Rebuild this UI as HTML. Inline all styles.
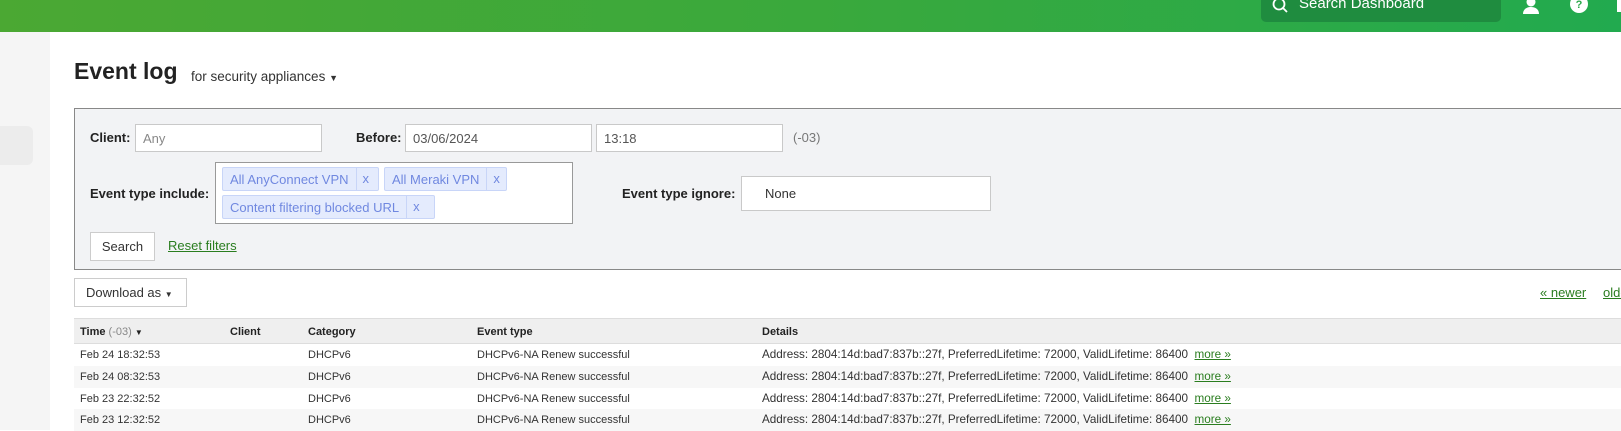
<!DOCTYPE html>
<html><head><meta charset="utf-8"><style>
*{margin:0;padding:0;box-sizing:border-box}
body{width:1621px;height:430px;overflow:hidden;background:#fff;font-family:"Liberation Sans",Arial,sans-serif;color:#222;position:relative}
.a{position:absolute}
.hdr{left:0;top:0;width:1621px;height:32px;background:linear-gradient(90deg,#4ba833 0%,#3aa93c 50%,#22aa4f 100%)}
.sb{left:0;top:32px;width:50px;height:398px;background:#f5f5f5}
.inp{background:#fff;border:1px solid #c9c9c9;font-size:13px;color:#555;padding-left:7px;display:flex;align-items:center}
.lbl{font-size:13px;font-weight:bold;color:#222}
.tag{height:24px;background:#e4ebfd;border:1px solid #c8d5f8;border-radius:2px;color:#7088e0;font-size:13px;display:flex;align-items:center;white-space:nowrap}
.tag span{padding:0 7px}
.tag b{font-weight:normal;border-left:1px solid #c8d5f8;padding:0 6px;height:22px;line-height:22px}
a{color:#2a7d1f;text-decoration:underline}
.th{font-size:11px;font-weight:bold;color:#222}
.row{left:74px;width:1547px;height:22px;font-size:11px;color:#333;white-space:nowrap}
.row div{position:absolute;top:5px}
.row div.d{font-size:11.7px;top:4px}
</style></head><body>
<div class="a hdr"></div>
<div class="a" style="left:1261px;top:0;width:240px;height:22px;background:#1f8c3f;border-radius:0 0 5px 5px"></div>
<svg class="a" style="left:1271px;top:-3px" width="18" height="18" viewBox="0 0 18 18"><circle cx="8" cy="7" r="5.5" fill="none" stroke="#fff" stroke-width="1.8"/><path d="M12 11l4 4" stroke="#fff" stroke-width="1.8"/></svg>
<div class="a" style="left:1299px;top:-5px;color:#fff;font-size:15px">Search Dashboard</div>
<svg class="a" style="left:1520px;top:0" width="22" height="14" viewBox="0 0 22 14"><circle cx="11" cy="2" r="4.5" fill="#fff"/><path d="M3 14c0-5 4-7 8-7s8 2 8 7z" fill="#fff"/></svg>
<svg class="a" style="left:1569px;top:0" width="20" height="14" viewBox="0 0 20 14"><circle cx="10" cy="4" r="9" fill="#fff"/><text x="10" y="8" font-size="11" font-weight="bold" text-anchor="middle" fill="#2aa94a" font-family="Liberation Sans">?</text></svg>
<div class="a" style="left:1617px;top:0;width:4px;height:12px;background:#fff"></div>
<div class="a sb"></div>
<div class="a" style="left:0;top:126px;width:33px;height:39px;background:#ececec;border-radius:0 6px 6px 0"></div>

<div class="a" style="left:74px;top:58px;font-size:23px;font-weight:bold;color:#222">Event log</div>
<div class="a" style="left:191px;top:69px;font-size:13.5px;color:#333">for security appliances <span style="font-size:9px">&#9660;</span></div>

<div class="a" style="left:74px;top:108px;width:1560px;height:162px;background:#f2f3f5;border:1px solid #888"></div>
<div class="a lbl" style="left:90px;top:130px">Client:</div>
<div class="a inp" style="left:135px;top:124px;width:187px;height:28px;color:#888">Any</div>
<div class="a lbl" style="left:356px;top:130px">Before:</div>
<div class="a inp" style="left:405px;top:124px;width:187px;height:28px">03/06/2024</div>
<div class="a inp" style="left:596px;top:124px;width:187px;height:28px">13:18</div>
<div class="a" style="left:793px;top:130px;font-size:13px;color:#777">(-03)</div>
<div class="a lbl" style="left:90px;top:186px">Event type include:</div>
<div class="a" style="left:215px;top:162px;width:358px;height:62px;background:#fff;border:1px solid #999"></div>
<div class="a tag" style="left:222px;top:167px;width:157px"><span>All AnyConnect VPN</span><b>x</b></div>
<div class="a tag" style="left:384px;top:167px;width:123px"><span>All Meraki VPN</span><b>x</b></div>
<div class="a tag" style="left:222px;top:195px;width:213px"><span>Content filtering blocked URL</span><b>x</b></div>
<div class="a lbl" style="left:622px;top:186px">Event type ignore:</div>
<div class="a inp" style="left:741px;top:176px;width:250px;height:35px;padding-left:23px;color:#333">None</div>
<div class="a" style="left:90px;top:232px;width:65px;height:29px;background:#fff;border:1px solid #ccc;font-size:13px;text-align:center;line-height:27px;color:#333">Search</div>
<div class="a" style="left:168px;top:238px;font-size:13px"><a>Reset filters</a></div>

<div class="a" style="left:74px;top:278px;width:113px;height:29px;background:#fff;border:1px solid #ccc;font-size:13px;line-height:27px;padding-left:11px;color:#333">Download as <span style="font-size:8px">&#9660;</span></div>
<div class="a" style="left:1540px;top:285px;font-size:13px"><a>« newer</a></div>
<div class="a" style="left:1603px;top:285px;font-size:13px"><a>older</a></div>

<div class="a" style="left:74px;top:318px;width:1547px;height:26px;background:#efefef;border-top:1px solid #ddd;border-bottom:1px solid #ddd"></div>
<div class="a th" style="left:80px;top:326px">Time <span style="font-weight:normal;color:#888">(-03)</span> <span style="font-size:8px">&#9660;</span></div>
<div class="a th" style="left:230px;top:326px">Client</div>
<div class="a th" style="left:308px;top:326px">Category</div>
<div class="a th" style="left:477px;top:326px">Event type</div>
<div class="a th" style="left:762px;top:326px">Details</div>

<div class="a row" style="top:344px;background:#fff"><div style="left:6px">Feb 24 18:32:53</div><div style="left:234px">DHCPv6</div><div style="left:403px">DHCPv6-NA Renew successful</div><div class="d" style="left:688px">Address: 2804:14d:bad7:837b::27f, PreferredLifetime: 72000, ValidLifetime: 86400 &nbsp;<a>more »</a></div></div>
<div class="a row" style="top:366px;background:#f7f7f7"><div style="left:6px">Feb 24 08:32:53</div><div style="left:234px">DHCPv6</div><div style="left:403px">DHCPv6-NA Renew successful</div><div class="d" style="left:688px">Address: 2804:14d:bad7:837b::27f, PreferredLifetime: 72000, ValidLifetime: 86400 &nbsp;<a>more »</a></div></div>
<div class="a row" style="top:388px;background:#fff"><div style="left:6px">Feb 23 22:32:52</div><div style="left:234px">DHCPv6</div><div style="left:403px">DHCPv6-NA Renew successful</div><div class="d" style="left:688px">Address: 2804:14d:bad7:837b::27f, PreferredLifetime: 72000, ValidLifetime: 86400 &nbsp;<a>more »</a></div></div>
<div class="a row" style="top:409px;background:#f7f7f7"><div style="left:6px">Feb 23 12:32:52</div><div style="left:234px">DHCPv6</div><div style="left:403px">DHCPv6-NA Renew successful</div><div class="d" style="left:688px">Address: 2804:14d:bad7:837b::27f, PreferredLifetime: 72000, ValidLifetime: 86400 &nbsp;<a>more »</a></div></div>
</body></html>
